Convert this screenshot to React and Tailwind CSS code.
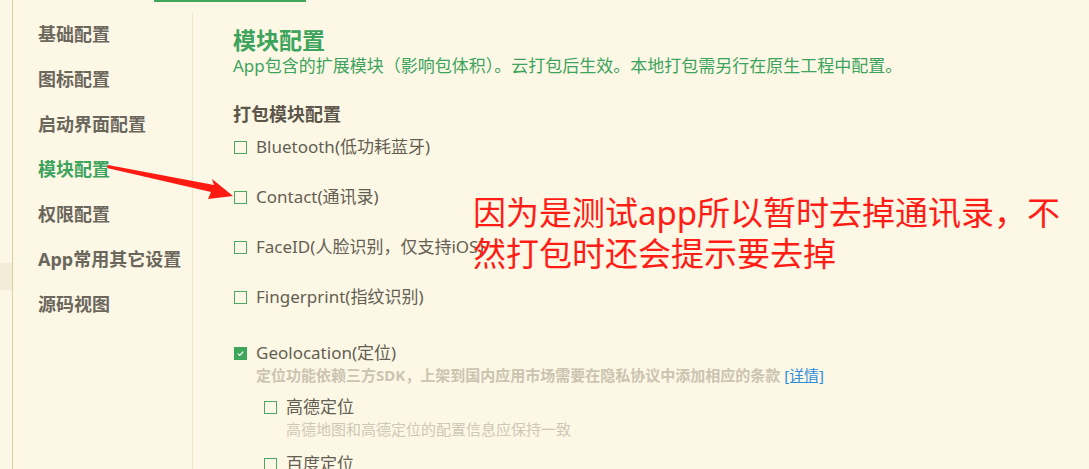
const navItems = ['基础配置', '图标配置', '启动界面配置', '模块配置', '权限配置', 'App常用其它设置', '源码视图'];

const Box = ({ checked }) =>
  checked ? (
    <span className="w-[13px] h-[13px] bg-[#3ea65a] flex items-center justify-center shrink-0">
      <svg width="9" height="9" viewBox="0 0 9 9">
        <path d="M1.8 4.6 L3.7 6.4 L7.2 2.6" fill="none" stroke="#fff" strokeWidth="1.3" />
      </svg>
    </span>
  ) : (
    <span className="w-[13px] h-[13px] border border-[#4aa862] shrink-0" />
  );

const Row = ({ label, checked }) => (
  <div className="h-[50px] flex items-center gap-[9px] pl-[1px]">
    <Box checked={checked} />
    <span className="text-[17px] text-[#645f52]">{label}</span>
  </div>
);

export default function App() {
  return (
    <div
      className="relative w-[1089px] h-[469px] overflow-hidden bg-[#fdf7e6] flex"
      style={{ fontFamily: '"Noto Sans", "Noto Sans CJK SC", sans-serif' }}
    >
      {/* left strip */}
      <div className="w-[13px] border-r border-[#dccfa6] flex flex-col pt-[263px]">
        <div className="h-[27px] bg-[#f3ecd8]" />
      </div>

      {/* sidebar */}
      <div className="w-[180px] flex flex-col mt-[12px]">
        <div className="flex-1 border-r border-[#efe6cc] pl-[25px]">
          {navItems.map((t) => (
            <div
              key={t}
              className={`h-[45px] flex items-center text-[18px] font-bold ${t === '模块配置' ? 'text-[#3ca45c]' : 'text-[#6b675c]'}`}
            >
              {t}
            </div>
          ))}
        </div>
      </div>

      {/* main */}
      <div className="flex-1 pl-[40px] relative">
        <div className="absolute top-0 left-[-39px] w-[152px] h-[2px] bg-[#3ea65a]" />
        <div className="pt-[24px] text-[23px] leading-[32px] font-bold text-[#3ca45c]">模块配置</div>
        <div className="mt-[-1px] text-[17px] leading-[22px] text-[#3ca45c]">
          App包含的扩展模块（影响包体积）。云打包后生效。本地打包需另行在原生工程中配置。
        </div>
        <div className="mt-[25px] text-[18px] leading-[24px] font-bold text-[#5b5649]">打包模块配置</div>
        <div className="mt-[-4px]">
          <Row label="Bluetooth(低功耗蓝牙)" />
          <Row label="Contact(通讯录)" />
          <Row label="FaceID(人脸识别，仅支持iOS)" />
          <Row label="Fingerprint(指纹识别)" />
          <div className="h-[40px] mt-[3px] flex items-end pb-[1px] pl-[1px]">
            <div className="h-[22px] flex items-center gap-[9px]">
              <Box checked />
              <span className="text-[17px] text-[#645f52]">Geolocation(定位)</span>
            </div>
          </div>
          <div className="pl-[23px] text-[15px] leading-[20px] font-bold text-[#cbc4b0]">
            定位功能依赖三方SDK，上架到国内应用市场需要在隐私协议中添加相应的条款{' '}
            <span className="text-[#2f8fdc] font-normal underline">[详情]</span>
          </div>
          <div className="pl-[31px] mt-[11px]">
            <div className="flex items-center gap-[9px] h-[22px]">
              <Box />
              <span className="text-[17px] text-[#645f52]">高德定位</span>
            </div>
            <div className="pl-[22px] text-[15px] leading-[22px] text-[#cfc8b5]">高德地图和高德定位的配置信息应保持一致</div>
            <div className="flex items-center gap-[9px] h-[22px] mt-[13px]">
              <Box />
              <span className="text-[17px] text-[#645f52]">百度定位</span>
            </div>
          </div>
        </div>
      </div>

      {/* annotation arrow */}
      <svg className="absolute left-0 top-0 pointer-events-none" width="1089" height="469">
        <polygon points="108,165 214,185 212,179 233,196 208,199 211,192 107,168" fill="#ff1a12" />
      </svg>

      {/* annotation text */}
      <div className="absolute left-[473px] top-[192px] text-[33px] leading-[41px] text-[#ff1d16]">
        <div>因为是测试app所以暂时去掉通讯录，不</div>
        <div>然打包时还会提示要去掉</div>
      </div>
    </div>
  );
}
